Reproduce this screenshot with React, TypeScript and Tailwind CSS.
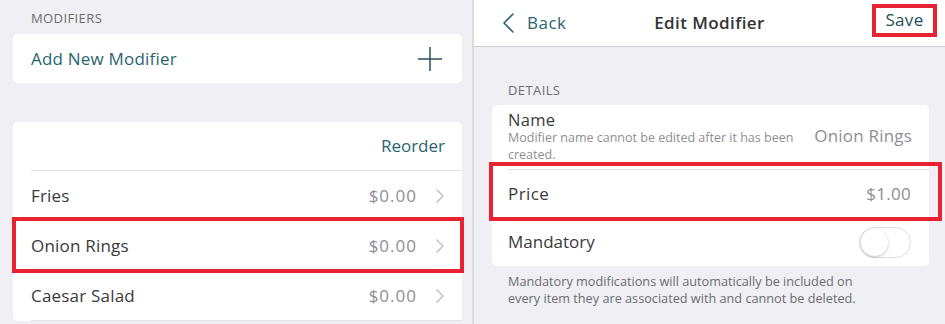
import React from "react";

const font = { fontFamily: "'Open Sans', Lato, sans-serif" };

function Chevron() {
  return (
    <svg width="8" height="14" viewBox="0 0 8 14" className="ml-[19px]">
      <path d="M1 1 L7 7 L1 13" fill="none" stroke="#c4c4c8" strokeWidth="1.6" strokeLinecap="round" strokeLinejoin="round" />
    </svg>
  );
}

function Row({ name, price, last, boxed }: { name: string; price: string; last?: boolean; boxed?: boolean }) {
  return (
    <div className="relative h-[50px] pl-[18px]">
      <div className={`flex h-full items-center pr-[18px] ${last ? "" : "border-b border-[#e3e3e6]"}`}>
        <span className="flex-1 text-[17px] tracking-[0.2px] text-[#3a3a3c]">{name}</span>
        <span className="text-[17px] tracking-[1px] text-[#8e8e93]">{price}</span>
        <Chevron />
      </div>
      {boxed && (
        <div className="pointer-events-none absolute -left-[1px] -right-[2px] -top-[4px] -bottom-[2px] border-[4px] border-[#e82230]" />
      )}
    </div>
  );
}

export default function App() {
  return (
    <div style={font} className="flex h-[324px] w-[945px] overflow-hidden bg-[#efeff4]">
      {/* Left panel */}
      <div className="w-[474px] shrink-0 border-r-2 border-[#dcdce0] pl-[13px] pr-[10px]">
        <div className="pl-[18px] pt-[10px] text-[13px] leading-[16px] tracking-[0.4px] text-[#6d6d72]">MODIFIERS</div>
        <div className="mt-[8px] flex h-[49px] items-center rounded-[5px] bg-white pl-[18px] pr-[20px]">
          <span className="flex-1 text-[17px] tracking-[0.2px] text-[#2b6470]">Add New Modifier</span>
          <svg width="24" height="24" viewBox="0 0 24 24">
            <path d="M12 0 V24 M0 12 H24" stroke="#2b4f5a" strokeWidth="1.5" />
          </svg>
        </div>
        <div className="mt-[39px] rounded-[5px] bg-white">
          <div className="ml-[18px] flex h-[49px] items-center justify-end border-b border-[#e3e3e6] pr-[17px]">
            <span className="text-[17px] text-[#2b6470]">Reorder</span>
          </div>
          <Row name="Fries" price="$0.00" />
          <Row name="Onion Rings" price="$0.00" boxed />
          <Row name="Caesar Salad" price="$0.00" />
        </div>
      </div>

      {/* Right panel */}
      <div className="flex-1">
        <div className="relative grid h-[47px] grid-cols-[1fr_auto_1fr] items-center border-b border-[#cfcfd4] bg-white">
          <div className="flex items-center pl-[28px]">
            <svg width="12" height="20" viewBox="0 0 12 20">
              <path d="M11 1 L2 10 L11 19" fill="none" stroke="#2b6470" strokeWidth="1.6" strokeLinecap="round" strokeLinejoin="round" />
            </svg>
            <span className="ml-[13px] text-[17px] tracking-[0.5px] text-[#2b6470]">Back</span>
          </div>
          <div className="text-center text-[17px] font-semibold tracking-[0.4px] text-[#333336]">Edit Modifier</div>
          <div className="flex justify-end">
            <div className="mr-[8px] mt-[-6px] flex h-[33px] w-[65px] items-center justify-center border-[4px] border-[#e82230] text-[17px] tracking-[0.3px] text-[#24505c]">
              Save
            </div>
          </div>
        </div>
        <div className="pl-[34px] pt-[35px] text-[13px] leading-[16px] tracking-[0.4px] text-[#6d6d72]">DETAILS</div>
        <div className="ml-[18px] mr-[16px] mt-[7px] rounded-[5px] bg-white">
          <div className="ml-[16px] flex h-[65px] items-center border-b border-[#e3e3e6] pr-[17px]">
            <div className="flex-1">
              <div className="text-[16.5px] leading-[18px] tracking-[0.3px] text-[#3a3a3c]">Name</div>
              <div className="w-[300px] text-[12.5px] leading-[17px] text-[#8e8e93]">
                Modifier name cannot be edited after it has been created.
              </div>
            </div>
            <span className="mb-[2px] text-[17px] tracking-[0.2px] text-[#8e8e93]">Onion Rings</span>
          </div>
          <div className="relative">
            <div className="ml-[16px] flex h-[48px] items-center border-b border-[#e3e3e6] pr-[18px]">
              <span className="flex-1 text-[17px] tracking-[0.4px] text-[#3a3a3c]">Price</span>
              <span className="text-[17px] tracking-[0.3px] text-[#8e8e93]">$1.00</span>
            </div>
            <div className="pointer-events-none absolute -left-[3px] -right-[13px] -top-[8px] -bottom-[3px] border-[4px] border-[#e82230]" />
          </div>
          <div className="ml-[16px] flex h-[48px] items-center pr-[18px]">
            <span className="flex-1 text-[17px] text-[#3a3a3c]">Mandatory</span>
            <div className="h-[31px] w-[52px] rounded-full border border-[#dedee2] bg-white p-[1px]">
              <div className="h-[27px] w-[27px] rounded-full bg-white shadow-[0_1px_3px_rgba(0,0,0,0.25)]" />
            </div>
          </div>
        </div>
        <div className="pl-[34px] pr-[10px] pt-[7px] text-[12.7px] leading-[17px] text-[#6d6d72]">
          Mandatory modifications will automatically be included on
          <br />
          every item they are associated with and cannot be deleted.
        </div>
      </div>
    </div>
  );
}
